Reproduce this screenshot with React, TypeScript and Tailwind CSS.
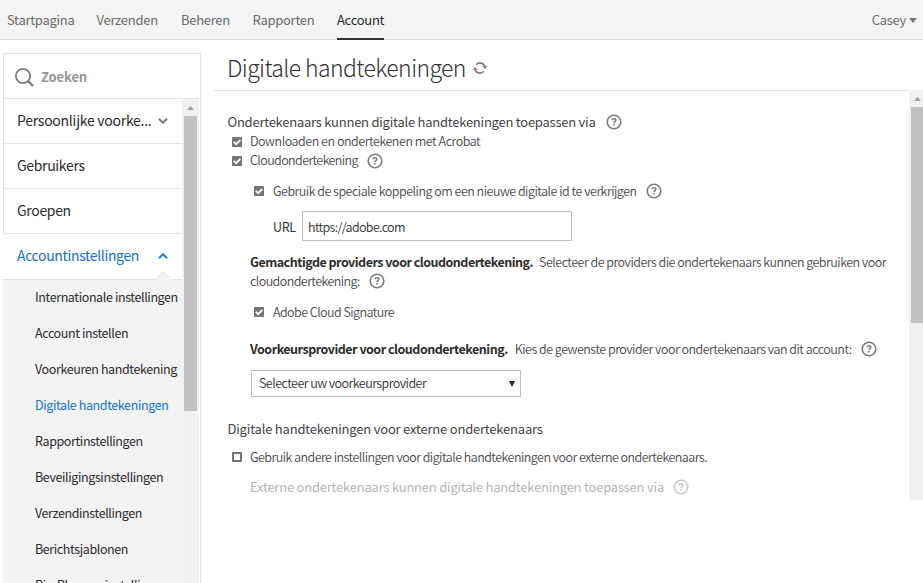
import React from 'react';

const tabs = [
  { label: 'Startpagina', width: 'w-[67px]' },
  { label: 'Verzenden', width: 'w-[62px]' },
  { label: 'Beheren', width: 'w-[49px]' },
  { label: 'Rapporten', width: 'w-[62px]' },
  { label: 'Account', width: 'w-[47px]', active: true },
];

const settings = [
  'Internationale instellingen',
  'Account instellen',
  'Voorkeuren handtekening',
  'Digitale handtekeningen',
  'Rapportinstellingen',
  'Beveiligingsinstellingen',
  'Verzendinstellingen',
  'Berichtsjablonen',
  'Bio-Pharma-instellingen',
];

const Help: React.FC<{ className?: string }> = ({ className = '' }) => (
  <svg viewBox="0 0 16 16" fill="none" stroke="currentColor" className={`inline-block h-4 w-4 shrink-0 text-[#7d7d7d] ${className}`}>
    <circle cx="8" cy="8" r="6.8" strokeWidth="1.6" />
    <path d="M6.1 6.2C6.2 5.2 7 4.7 8 4.7s1.8.6 1.8 1.5c0 .8-.5 1.1-1 1.5-.5.3-.8.6-.8 1.3" strokeWidth="1.6" />
    <path d="M7.1 10.8h1.7" strokeWidth="1.6" />
  </svg>
);

const Checkbox: React.FC<{ checked?: boolean }> = ({ checked }) =>
  checked ? (
    <svg viewBox="0 0 10 10" fill="none" className="h-2.5 w-2.5 shrink-0">
      <rect width="10" height="10" rx="0.5" fill="#757575" />
      <path d="M1.8 4.9l2.4 2.3L8.3 2.8" stroke="#fff" strokeWidth="1.8" />
    </svg>
  ) : (
    <span className="h-2.5 w-2.5 shrink-0 rounded-[1px] border-2 border-[#757575]" />
  );

const ScrollArrow: React.FC = () => (
  <svg viewBox="0 0 7 4" className="mx-auto h-1 w-[7px]">
    <path d="M3.5 0L7 4H0z" fill="#a3a3a3" />
  </svg>
);

const Header: React.FC = () => (
  <header className="flex h-10 items-stretch justify-between border-b border-[#e0e0e0] bg-[#f4f4f4] pr-[6px] pl-[7px] text-[13px] tracking-[-0.28px] text-[#6b6b6b]">
    <nav className="flex gap-[22.5px]">
      {tabs.map((tab) => (
        <a
          key={tab.label}
          className={`-mb-px whitespace-nowrap leading-[40px] ${tab.width} ${tab.active ? 'border-b-2 border-[#323232] text-[#2c2c2c]' : ''}`}
        >
          {tab.label}
        </a>
      ))}
    </nav>
    <div className="flex items-center gap-[3px] leading-[38px]">
      Casey
      <svg viewBox="0 0 8 5" className="mt-px h-[5px] w-2">
        <path d="M0 0h8L4 5z" fill="#757575" />
      </svg>
    </div>
  </header>
);

const Sidebar: React.FC = () => (
  <aside className="ml-[3px] flex h-[530px] w-[198px] shrink-0 flex-col border-t border-r border-[#e4e4e4]">
    <div className="flex h-[45px] shrink-0 items-center border-b border-l border-[#e4e4e4] pt-[2px] pl-[11px]">
      <svg viewBox="0 0 19 19" fill="none" stroke="#7d7d7d" className="h-[19px] w-[19px]">
        <circle cx="8" cy="8" r="7.1" strokeWidth="1.8" />
        <path d="M13 13l5 5" strokeWidth="2.4" />
      </svg>
      <span className="ml-[7px] text-[13px] font-bold tracking-[-0.13px] text-[#959595]">Zoeken</span>
    </div>
    <div className="flex min-h-0 flex-1">
      <div className="flex w-[179px] shrink-0 flex-col overflow-hidden">
        <div className="border-l border-[#e4e4e4] text-[14px] tracking-[-0.33px] text-[#2c2c2c]">
          <div className="flex h-[45px] items-center justify-between border-b border-[#e4e4e4] pr-[14px] pl-[13px]">
            <span className="pb-[2px] tracking-[-0.26px]">Persoonlijke voorke...</span>
            <svg viewBox="0 0 10 6" fill="none" className="h-[6px] w-[10px]">
              <path d="M1 .8l4 4 4-4" stroke="#7d7d7d" strokeWidth="2" />
            </svg>
          </div>
          <div className="flex h-[45px] items-center border-b border-[#e4e4e4] pb-[2px] pl-[13px]">Gebruikers</div>
          <div className="flex h-[45px] items-center border-b border-[#e4e4e4] pb-[2px] pl-[13px]">Groepen</div>
        </div>
        <div className="relative flex h-[46px] shrink-0 items-center justify-between border-b border-[#e0e0e0] pr-[14px] pb-px pl-[14px] text-[14px] tracking-[-0.35px] text-[#1473c4]">
          <span className="pb-[2px]">Accountinstellingen</span>
          <svg viewBox="0 0 10 6" fill="none" className="h-[6px] w-[10px]">
            <path d="M1 5.2l4-4 4 4" stroke="#2680cf" strokeWidth="2" />
          </svg>
          <svg viewBox="0 0 18 10" className="absolute right-[10px] -bottom-[2px] h-[10px] w-[18px]">
            <path d="M0 8.5h1L9 .6l8 7.9h1V10H0z" fill="#f3f3f3" />
            <path d="M0 8.5h1L9 .6l8 7.9h1" fill="none" stroke="#e4e4e4" />
          </svg>
        </div>
        <div className="flex-1 overflow-hidden bg-[#f3f3f3] text-[12.5px] tracking-[-0.39px] text-[#2c2c2c]">
          {settings.map((label) => (
            <div
              key={label}
              className={`h-9 pl-8 leading-[34px] whitespace-nowrap ${label === 'Digitale handtekeningen' ? 'text-[#1473c4]' : ''}`}
            >
              {label}
            </div>
          ))}
        </div>
      </div>
      <div className="w-[17px] bg-[#f1f1f1] pt-[7px]">
        <ScrollArrow />
        <div className="mt-[6px] ml-[2px] h-[295px] w-[13px] bg-[#c1c1c1]" />
      </div>
    </div>
  </aside>
);

const Content: React.FC = () => (
  <main className="ml-[13px] w-[709px] shrink-0 text-[12.5px] font-[350] tracking-[-0.51px] text-[#4b4b4b]">
    <div className="flex h-[38px] w-[695px] items-center border-b border-[#e4e4e4] pb-[7px] pl-[13px]">
      <h1 className="w-[246px] pb-px text-[23px] leading-none font-light tracking-[-0.6px] whitespace-nowrap text-[#323232]">
        Digitale handtekeningen
      </h1>
      <svg viewBox="0 0 14 14" fill="none" stroke="#7d7d7d" strokeWidth="1.7" className="h-[14px] w-[14px]">
        <path d="M3.2 3.7A5.2 5.2 0 0 1 12 5.6M10.8 10.3A5.2 5.2 0 0 1 2 8.4" />
        <path d="M9 5.2h5L12.4 8zM5 8.8H0L1.6 6z" fill="#7d7d7d" stroke="none" />
      </svg>
    </div>

    <div className="flex h-[409px] justify-between">
      <div className="w-[680px] pt-[21px] pl-[14px] whitespace-nowrap">
        <div className="-ml-[0.5px] flex h-5 items-center text-[13px] font-normal tracking-[-0.24px] text-[#444]">
          Ondertekenaars kunnen digitale handtekeningen toepassen via
          <Help className="ml-[10px]" />
        </div>
        <label className="flex h-[19px] items-center gap-2 pl-1 tracking-[-0.46px]">
          <Checkbox checked />
          Downloaden en ondertekenen met Acrobat
        </label>
        <label className="flex h-[19px] items-center gap-2 pl-1 tracking-[-0.6px]">
          <Checkbox checked />
          Cloudondertekening
          <Help className="ml-px" />
        </label>

        <div className="pl-[22px]">
          <label className="mt-[11px] flex h-5 items-center gap-[9px] pl-1 tracking-[-0.5px]">
            <Checkbox checked />
            Gebruik de speciale koppeling om een nieuwe digitale id te verkrijgen
            <Help />
          </label>
          <div className="mt-[10px] flex h-[30px] items-center pl-[23px]">
            <span className="w-[29px] pt-[2px] font-normal tracking-[-0.3px] text-[#323232]">URL</span>
            <div className="flex h-full w-[270px] items-center rounded-[1px] border border-[#bdbdbd] px-[5px] pt-[2px] tracking-[-0.65px] text-[#323232]">
              https://adobe.com
            </div>
          </div>
          <p className="mt-[11px] leading-[19px]">
            <b className="mr-[6px] tracking-[-0.51px] text-[#2c2c2c]">Gemachtigde providers voor cloudondertekening.</b>
            Selecteer de providers die ondertekenaars kunnen gebruiken voor
            <span className="flex items-center tracking-[-0.56px]">
              cloudondertekening:
              <Help className="ml-[9px]" />
            </span>
          </p>
          <label className="mt-3 flex h-5 items-center gap-[9px] pl-1 tracking-[-0.55px]">
            <Checkbox checked />
            Adobe Cloud Signature
          </label>
          <div className="mt-[17px] flex h-5 items-center tracking-[-0.5px]">
            <b className="mr-[7px] tracking-[-0.49px] text-[#2c2c2c]">Voorkeursprovider voor cloudondertekening.</b>
            Kies de gewenste provider voor ondertekenaars van dit account:
            <Help className="ml-[9px]" />
          </div>
          <div className="mt-[11px] ml-px flex h-[27px] w-[270px] items-center justify-between border border-[#bdbdbd] pr-[5px] pl-[7px] tracking-[-0.53px] text-[#323232]">
            Selecteer uw voorkeursprovider
            <svg viewBox="0 0 6 6" className="h-[6px] w-[6px]">
              <path d="M0 0h6L3 6z" fill="#2c2c2c" />
            </svg>
          </div>
        </div>

        <h2 className="mt-[22px] -ml-[0.5px] flex h-5 items-center text-[13px] font-normal tracking-[-0.2px] text-[#444]">
          Digitale handtekeningen voor externe ondertekenaars
        </h2>
        <label className="mt-2 flex h-5 items-center gap-2 pl-1 tracking-[-0.53px]">
          <Checkbox />
          Gebruik andere instellingen voor digitale handtekeningen voor externe ondertekenaars.
        </label>
        <div className="mt-[10px] flex h-5 items-center pl-[22px] text-[13px] font-normal tracking-[-0.22px] text-[#444] opacity-40">
          Externe ondertekenaars kunnen digitale handtekeningen toepassen via
          <Help className="ml-[9px]" />
        </div>
      </div>
      <div className="-mt-px h-[410px] w-[14px] bg-[#f1f1f1] pt-[7px] pl-[2px]">
        <ScrollArrow />
        <div className="mt-[6px] h-[216px] w-3 bg-[#c1c1c1]" />
      </div>
    </div>
  </main>
);

const App: React.FC = () => {
  return (
    <div className="h-[583px] w-[923px] overflow-hidden bg-white font-['Noto_Sans_CJK_SC',sans-serif]">
      <Header />
      <div className="flex items-start pt-[13px]">
        <Sidebar />
        <Content />
      </div>
    </div>
  );
};

export default App;
